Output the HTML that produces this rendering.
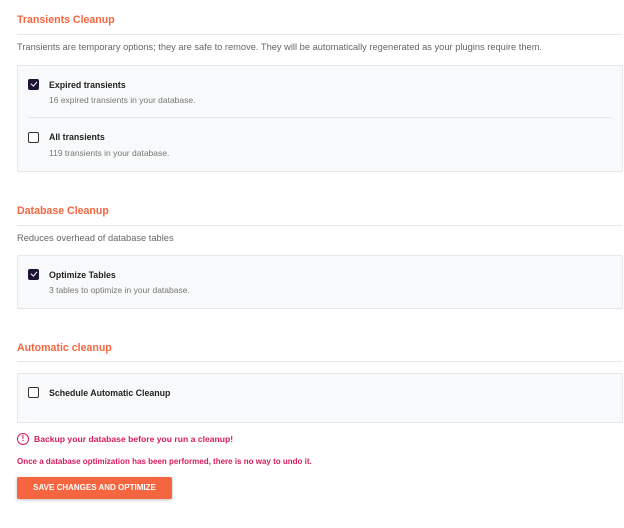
<!DOCTYPE html>
<html><head><style>
body{margin:0;width:624px;height:528px;background:#fff;font-family:"Liberation Sans",sans-serif;position:relative;overflow:hidden}
.a{position:absolute;white-space:nowrap}
h3{position:absolute;margin:0;left:17px;font-size:10.6px;font-weight:bold;color:#f56640}
.ln{position:absolute;left:17px;width:605px;height:1px;background:#e8e8ec}
.d{left:17px;font-size:9.3px;color:#666}
.box{position:absolute;left:17px;width:604px;background:#f8f9fa;border:1px solid #e6e7ea;border-radius:2px}
.cb{position:absolute;left:28px;width:9px;height:9px;border:1.5px solid #333;border-radius:2px;background:#fff}
.cb.on{background:#1e1335;border-color:#1e1335}
.cb.on:after{content:"";position:absolute;left:2.5px;top:0px;width:2.5px;height:5px;border:solid #fff;border-width:0 1.5px 1.5px 0;transform:rotate(40deg)}
.t{left:49px;font-size:8.8px;font-weight:bold;color:#222}
.s{left:49px;font-size:8.5px;color:#777}
</style></head><body>
<h3 style="top:14px">Transients Cleanup</h3>
<div class="ln" style="top:34px"></div>
<div class="a d" style="top:42px">Transients are temporary options; they are safe to remove. They will be automatically regenerated as your plugins require them.</div>
<div class="box" style="top:65px;height:105px"></div>
<div class="cb on" style="top:79px"></div>
<div class="a t" style="top:80px">Expired transients</div>
<div class="a s" style="top:95px">16 expired transients in your database.</div>
<div style="position:absolute;left:28px;top:117px;width:583px;height:1px;background:#e4e5e8"></div>
<div class="cb" style="top:132px"></div>
<div class="a t" style="top:132px">All transients</div>
<div class="a s" style="top:148px">119 transients in your database.</div>

<h3 style="top:205px">Database Cleanup</h3>
<div class="ln" style="top:225px"></div>
<div class="a d" style="top:233px">Reduces overhead of database tables</div>
<div class="box" style="top:255px;height:52px"></div>
<div class="cb on" style="top:269px"></div>
<div class="a t" style="top:270px">Optimize Tables</div>
<div class="a s" style="top:285px">3 tables to optimize in your database.</div>

<h3 style="top:342px">Automatic cleanup</h3>
<div class="ln" style="top:361px"></div>
<div class="box" style="top:373px;height:48px"></div>
<div class="cb" style="top:387px"></div>
<div class="a t" style="top:388px">Schedule Automatic Cleanup</div>

<div class="a" style="left:17px;top:433px;width:10px;height:10px;border:1.3px solid #d81b60;border-radius:50%;font-size:8px;font-weight:bold;color:#d81b60;text-align:center;line-height:10px">!</div>
<div class="a" style="left:34px;top:434px;font-size:8.6px;font-weight:bold;color:#d81b60">Backup your database before you run a cleanup!</div>
<div class="a" style="left:17px;top:457px;font-size:8px;font-weight:bold;color:#d81b60">Once a database optimization has been performed, there is no way to undo it.</div>
<div class="a" style="left:17px;top:477px;width:155px;height:22px;background:#f56640;border-radius:2px;box-shadow:0 1px 3px rgba(0,0,0,.25);color:#fff;font-size:8px;font-weight:bold;text-align:center;line-height:22px">SAVE CHANGES AND OPTIMIZE</div>
</body></html>
